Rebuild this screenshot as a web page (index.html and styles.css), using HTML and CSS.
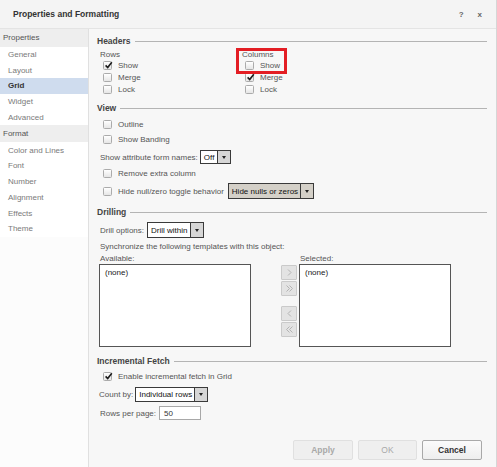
FILE: index.html
```html
<!DOCTYPE html>
<html>
<head>
<meta charset="utf-8">
<title>Properties and Formatting</title>
<link rel="stylesheet" href="styles.css">
</head>
<body>
<div class="dialog">
  <div class="titlebar">
    <span class="title">Properties and Formatting</span>
    <span class="tb-icons"><span class="help">?</span><span class="close">x</span></span>
  </div>
  <div class="body">
    <nav class="sidebar">
      <div class="side-head">Properties</div>
      <div class="side-item">General</div>
      <div class="side-item">Layout</div>
      <div class="side-item active">Grid</div>
      <div class="side-item">Widget</div>
      <div class="side-item">Advanced</div>
      <div class="side-head">Format</div>
      <div class="side-item">Color and Lines</div>
      <div class="side-item">Font</div>
      <div class="side-item">Number</div>
      <div class="side-item">Alignment</div>
      <div class="side-item">Effects</div>
      <div class="side-item">Theme</div>
    </nav>
    <main class="content">
      <div class="sec-title"><span>Headers</span><i class="rule"></i></div>
      <div class="hdr-grid">
        <div class="hdr-col">
          <div class="col-label">Rows</div>
          <div class="chk-row"><span class="cb checked"><svg viewBox="0 0 9 9"><path d="M1.6 4.4 L3.7 6.6 L7.8 1.2"/></svg></span>Show</div>
          <div class="chk-row"><span class="cb"></span>Merge</div>
          <div class="chk-row"><span class="cb"></span>Lock</div>
        </div>
        <div class="hdr-col hdr-col2">
          <div class="col-label">Columns</div>
          <div class="chk-row"><span class="cb"></span>Show</div>
          <div class="chk-row"><span class="cb checked"><svg viewBox="0 0 9 9"><path d="M1.6 4.4 L3.7 6.6 L7.8 1.2"/></svg></span>Merge</div>
          <div class="chk-row"><span class="cb"></span>Lock</div>
          <div class="annot"></div>
        </div>
      </div>

      <div class="sec-title sec-gap"><span>View</span><i class="rule"></i></div>
      <div class="view-row first"><span class="cb"></span>Outline</div>
      <div class="view-row"><span class="cb"></span>Show Banding</div>
      <div class="field-row attr-row">Show attribute form names:<span class="select sel-off"><span class="sel-text">Off</span><span class="sel-btn"><i class="tri"></i></span></span></div>
      <div class="view-row extra-row"><span class="cb"></span>Remove extra column</div>
      <div class="view-row hide-row"><span class="cb"></span>Hide null/zero toggle behavior<span class="select sel-hide"><span class="sel-text">Hide nulls or zeros</span><span class="sel-btn"><i class="tri"></i></span></span></div>

      <div class="sec-title sec-gap"><span>Drilling</span><i class="rule"></i></div>
      <div class="field-row drill-row">Drill options:<span class="select sel-drill"><span class="sel-text">Drill within</span><span class="sel-btn"><i class="tri"></i></span></span></div>
      <div class="sync-row">Synchronize the following templates with this object:</div>
      <div class="lists">
        <div class="list-col">
          <div class="list-label">Available:</div>
          <div class="listbox">(none)</div>
        </div>
        <div class="move-btns">
          <span class="mbtn"><svg viewBox="0 0 9 9"><path d="M3 1.5 L6 4.5 L3 7.5"/></svg></span>
          <span class="mbtn"><svg viewBox="0 0 9 9"><path d="M1.5 1.5 L4.5 4.5 L1.5 7.5 M4.5 1.5 L7.5 4.5 L4.5 7.5"/></svg></span>
          <span class="mbtn gap"><svg viewBox="0 0 9 9"><path d="M6 1.5 L3 4.5 L6 7.5"/></svg></span>
          <span class="mbtn"><svg viewBox="0 0 9 9"><path d="M4.5 1.5 L1.5 4.5 L4.5 7.5 M7.5 1.5 L4.5 4.5 L7.5 7.5"/></svg></span>
        </div>
        <div class="list-col sel-col">
          <div class="list-label">Selected:</div>
          <div class="listbox">(none)</div>
        </div>
      </div>

      <div class="sec-title inc-gap"><span>Incremental Fetch</span><i class="rule"></i></div>
      <div class="view-row enable-row"><span class="cb checked"><svg viewBox="0 0 9 9"><path d="M1.6 4.4 L3.7 6.6 L7.8 1.2"/></svg></span>Enable incremental fetch in Grid</div>
      <div class="field-row count-row">Count by:<span class="select sel-count"><span class="sel-text">Individual rows</span><span class="sel-btn"><i class="tri"></i></span></span></div>
      <div class="field-row rpp-row">Rows per page:<span class="textbox">50</span></div>

      <div class="footer">
        <span class="btn disabled">Apply</span>
        <span class="btn disabled ok">OK</span>
        <span class="btn primary">Cancel</span>
      </div>
    </main>
  </div>
</div>
</body>
</html>
```

FILE: styles.css
```css
* { box-sizing: border-box; margin: 0; padding: 0; }
html, body { width: 497px; height: 467px; overflow: hidden; }
body {
  font-family: "Liberation Sans", Arial, sans-serif;
  font-size: 8px;
  color: #555;
  background: #fff;
}
.dialog {
  width: 497px;
  height: 467px;
  display: flex;
  flex-direction: column;
  background: #f7f7f7;
  border-right: 1px solid #d6d6d6;
}
.titlebar {
  height: 29px;
  flex: none;
  display: flex;
  align-items: center;
  justify-content: space-between;
  padding: 0 14px 0 13px;
  background: #f4f4f4;
  border-bottom: 1px solid #e4e4e4;
}
.title { font-weight: bold; font-size: 8.5px; color: #333; }
.tb-icons { display: flex; gap: 14px; font-weight: bold; color: #666; font-size: 8px; }

.body { flex: 1; display: flex; min-height: 0; }
.sidebar {
  width: 89px;
  flex: none;
  background: #fcfcfc;
  border-right: 1px solid #e0e0e0;
}
.side-head {
  height: 17.5px;
  display: flex;
  align-items: center;
  padding-left: 3px;
  background: #eeeeee;
  color: #555;
}
.side-item {
  height: 15.7px;
  display: flex;
  align-items: center;
  padding-left: 8px;
  color: #7a7a7a;
  background: #fff;
}
.side-item.active { background: #cfdcee; color: #333; font-weight: bold; }

.content {
  flex: 1;
  padding: 5px 9px 0 8px;
  display: flex;
  flex-direction: column;
}
.sec-title {
  height: 14px;
  flex: none;
  display: flex;
  align-items: center;
  gap: 4px;
  font-weight: bold;
  font-size: 8.5px;
  color: #444;
}
.sec-title .rule { flex: 1; height: 1px; background: #b4b4b4; }
.sec-gap { margin-top: 6px; }
.inc-gap { margin-top: 7px; }

.cb {
  width: 9px;
  height: 9px;
  flex: none;
  border: 1px solid #ababab;
  border-radius: 1.5px;
  background: linear-gradient(#ffffff, #e6e6e6);
  margin-right: 6px;
  position: relative;
  display: inline-block;
}
.cb svg {
  position: absolute;
  left: 0;
  top: -1px;
  width: 9px;
  height: 9px;
  overflow: visible;
}
.cb svg path { fill: none; stroke: #1c1c1c; stroke-width: 1.6; }

.hdr-grid {
  margin-top: 3px;
  display: grid;
  grid-template-columns: 142px 1fr;
  padding-left: 3px;
}
.hdr-col { position: relative; }
.col-label { height: 8px; line-height: 8px; }
.chk-row {
  height: 12px;
  display: flex;
  align-items: center;
  padding-left: 3px;
}
.annot {
  position: absolute;
  left: -6px;
  top: -3px;
  width: 51px;
  height: 26px;
  border: 3px solid #e31e24;
}

.view-row {
  height: 15px;
  display: flex;
  align-items: center;
  padding-left: 6px;
  flex: none;
}
.view-row.first { margin-top: 2px; }
.field-row {
  display: flex;
  align-items: center;
  padding-left: 3px;
  flex: none;
}
.attr-row { height: 14px; margin-top: 3px; gap: 2px; }
.extra-row { height: 14px; margin-top: 2px; }
.hide-row { height: 16px; margin-top: 3px; }
.hide-row .select { margin-left: 4px; }
.drill-row { height: 16px; margin-top: 3px; gap: 3px; }
.sync-row { height: 12px; line-height: 12px; margin-top: 3px; padding-left: 3px; flex: none; }
.enable-row { height: 14px; margin-top: 1px; }
.count-row { height: 15px; margin-top: 4px; gap: 2px; padding-left: 2px; }
.rpp-row { height: 14px; margin-top: 4px; gap: 3px; }

.select {
  display: inline-flex;
  height: 100%;
  border: 1px solid #3a3a3a;
  background: #fff;
  color: #111;
}
.sel-text {
  flex: 1;
  display: flex;
  align-items: center;
  padding-left: 3px;
  white-space: nowrap;
}
.sel-btn {
  width: 13px;
  flex: none;
  border-left: 1px solid #3a3a3a;
  background: #d6d6d6;
  display: flex;
  align-items: center;
  justify-content: center;
}
.tri {
  width: 0;
  height: 0;
  border-left: 2.5px solid transparent;
  border-right: 2.5px solid transparent;
  border-top: 3px solid #222;
}
.sel-off { width: 31px; }
.sel-drill { width: 57px; }
.sel-count { width: 73px; }
.sel-hide { width: 86px; background: #d4d0c8; }
.sel-hide .sel-btn { background: #d4d0c8; }

.lists { display: flex; flex: none; padding-left: 2px; }
.list-col { display: flex; flex-direction: column; width: 152px; }
.list-label { height: 11px; line-height: 11px; padding-left: 1px; }
.listbox {
  height: 83px;
  background: #fff;
  border: 1px solid #555;
  color: #222;
  padding: 3px 0 0 5px;
}
.move-btns {
  width: 16px;
  margin: 0 2px 0 30px;
  padding-top: 12px;
  display: flex;
  flex-direction: column;
  gap: 1px;
}
.mbtn {
  height: 15px;
  background: #e3e3e3;
  border: 1px solid #cacaca;
  border-radius: 1px;
  display: flex;
  align-items: center;
  justify-content: center;
}
.mbtn svg { width: 9px; height: 9px; }
.mbtn svg path { fill: none; stroke: #b3b3b3; stroke-width: 1; }
.mbtn.gap { margin-top: 9px; }

.textbox {
  width: 42px;
  height: 14px;
  background: #fff;
  border: 1px solid #a8a8a8;
  color: #333;
  padding-left: 4px;
  display: flex;
  align-items: center;
}

.footer {
  margin-top: 20px;
  display: flex;
  justify-content: flex-end;
  gap: 5px;
  padding-right: 5px;
}
.btn {
  width: 60px;
  height: 20px;
  display: flex;
  align-items: center;
  justify-content: center;
  border-radius: 2px;
  font-size: 8.5px;
  font-weight: bold;
}
.btn.ok { width: 59px; font-weight: normal; }
.btn.disabled {
  background: #efefef;
  border: 1px solid #e0e0e0;
  color: #a9a9a9;
}
.btn.primary {
  background: linear-gradient(#fbfbfb, #eeeeee);
  border: 1px solid #a9a9a9;
  color: #333;
}
```
